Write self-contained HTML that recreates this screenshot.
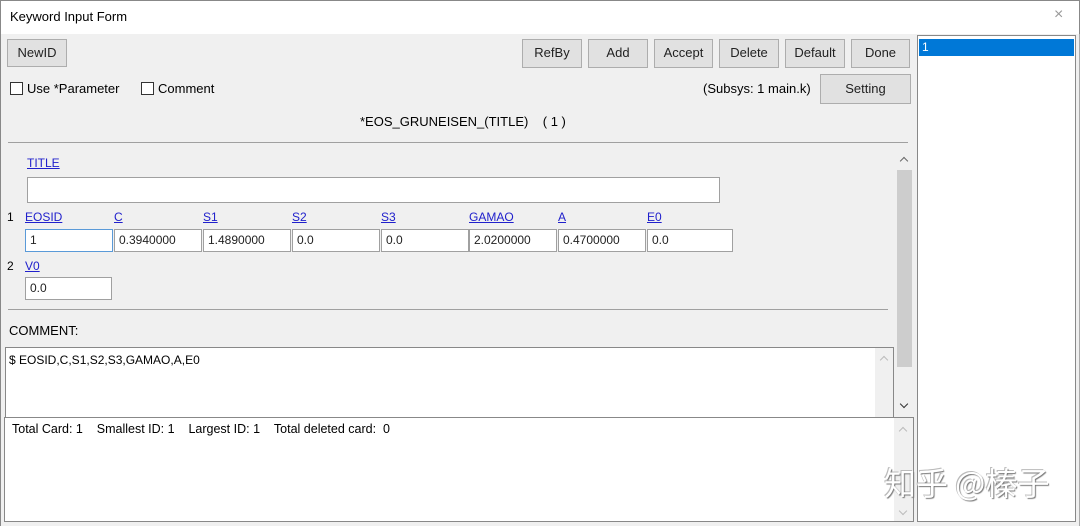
<!DOCTYPE html>
<html><head><style>
*{box-sizing:border-box;margin:0;padding:0}
body{width:1080px;height:526px;overflow:hidden;background:#f0f0f0;font-family:"Segoe UI","Liberation Sans","Noto Sans CJK SC",sans-serif;font-size:13px;color:#000;position:relative}
.a{position:absolute}
.tb{left:0;top:0;width:1080px;height:34px;background:#fff;border:1px solid #888;border-bottom:none}
.btn{position:absolute;background:#e1e1e1;border:1px solid #adadad;text-align:center;font-size:13px;line-height:26px;color:#222}
.in{position:absolute;background:#fff;border:1px solid #a0a0a0;font-size:12px;padding-left:4px;line-height:21px;height:23px;width:88px;color:#222}
.lk{position:absolute;color:#2020cc;text-decoration:underline;font-size:12px}
.cb{position:absolute;width:13px;height:13px;border:1px solid #333;background:#fff}
.up,.dn{position:absolute;width:6px;height:6px;border-left:1.5px solid #999;border-top:1.5px solid #999;transform:rotate(45deg)}
.dn{transform:rotate(225deg)}
</style></head><body>
<div class="a tb"></div>
<div class="a" style="left:10px;top:9px;font-size:13px">Keyword Input Form</div>
<div class="a" style="left:1054px;top:6px;font-size:16px;color:#999">×</div>
<div class="a" style="left:0;top:34px;width:1px;height:492px;background:#888"></div>
<div class="a" style="right:0;top:34px;width:1px;height:492px;background:#aaa"></div>

<div class="btn" style="left:7px;top:39px;width:60px;height:28px">NewID</div>
<div class="btn" style="left:522px;top:39px;width:60px;height:29px">RefBy</div>
<div class="btn" style="left:588px;top:39px;width:60px;height:29px">Add</div>
<div class="btn" style="left:654px;top:39px;width:59px;height:29px">Accept</div>
<div class="btn" style="left:719px;top:39px;width:60px;height:29px">Delete</div>
<div class="btn" style="left:785px;top:39px;width:60px;height:29px">Default</div>
<div class="btn" style="left:851px;top:39px;width:59px;height:29px">Done</div>

<div class="cb" style="left:10px;top:82px"></div><div class="a" style="left:27px;top:81px">Use *Parameter</div>
<div class="cb" style="left:141px;top:82px"></div><div class="a" style="left:158px;top:81px">Comment</div>
<div class="a" style="left:703px;top:81px">(Subsys: 1 main.k)</div>
<div class="btn" style="left:820px;top:74px;width:91px;height:30px;line-height:28px">Setting</div>
<div class="a" style="left:360px;top:114px">*EOS_GRUNEISEN_(TITLE) &nbsp;&nbsp;&nbsp;( 1 )</div>
<div class="a" style="left:8px;top:142px;width:900px;height:1px;background:#a0a0a0"></div>

<div class="a" style="left:896px;top:150px;width:17px;height:266px;background:#f0f0f0"></div>
<div class="up" style="left:901px;top:158px;border-color:#666"></div>
<div class="a" style="left:897px;top:170px;width:15px;height:197px;background:#cdcdcd"></div>
<div class="dn" style="left:901px;top:401px;border-color:#333"></div>

<div class="lk" style="left:27px;top:156px">TITLE</div>
<div class="a" style="left:27px;top:177px;width:693px;height:26px;background:#fff;border:1px solid #a0a0a0"></div>
<div class="a" style="left:7px;top:210px;font-size:12px">1</div>
<div class="lk" style="left:25px;top:210px">EOSID</div>
<div class="lk" style="left:114px;top:210px">C</div>
<div class="lk" style="left:203px;top:210px">S1</div>
<div class="lk" style="left:292px;top:210px">S2</div>
<div class="lk" style="left:381px;top:210px">S3</div>
<div class="lk" style="left:469px;top:210px">GAMAO</div>
<div class="lk" style="left:558px;top:210px">A</div>
<div class="lk" style="left:647px;top:210px">E0</div>
<div class="in" style="left:25px;top:229px;border-color:#5a9ad8">1</div>
<div class="in" style="left:114px;top:229px">0.3940000</div>
<div class="in" style="left:203px;top:229px">1.4890000</div>
<div class="in" style="left:292px;top:229px">0.0</div>
<div class="in" style="left:381px;top:229px">0.0</div>
<div class="in" style="left:469px;top:229px">2.0200000</div>
<div class="in" style="left:558px;top:229px">0.4700000</div>
<div class="in" style="left:647px;top:229px;width:86px">0.0</div>
<div class="a" style="left:7px;top:259px;font-size:12px">2</div>
<div class="lk" style="left:25px;top:259px">V0</div>
<div class="in" style="left:25px;top:277px;width:87px">0.0</div>
<div class="a" style="left:8px;top:309px;width:880px;height:1px;background:#a0a0a0"></div>
<div class="a" style="left:9px;top:323px">COMMENT:</div>
<div class="a" style="left:5px;top:347px;width:889px;height:72px;background:#fff;border:1px solid #888"></div>
<div class="a" style="left:875px;top:348px;width:18px;height:69px;background:#f0f0f0"></div>
<div class="up" style="left:881px;top:357px;border-color:#bbb"></div>
<div class="a" style="left:9px;top:353px;font-size:12px">$ EOSID,C,S1,S2,S3,GAMAO,A,E0</div>
<div class="a" style="left:4px;top:417px;width:910px;height:105px;background:#fff;border:1px solid #888"></div>
<div class="a" style="left:894px;top:418px;width:19px;height:103px;background:#f0f0f0"></div>
<div class="up" style="left:900px;top:428px;border-color:#bbb"></div>
<div class="dn" style="left:900px;top:508px;border-color:#bbb"></div>
<div class="a" style="left:12px;top:422px;font-size:12.5px">Total Card:&nbsp;1 &nbsp;&nbsp;&nbsp;Smallest ID:&nbsp;1 &nbsp;&nbsp;&nbsp;Largest ID:&nbsp;1 &nbsp;&nbsp;&nbsp;Total deleted card:&nbsp;&nbsp;0</div>

<div class="a" style="left:917px;top:35px;width:159px;height:487px;background:#fff;border:1px solid #888"></div>
<div class="a" style="left:919px;top:39px;width:155px;height:17px;background:#0078d7;color:#fff;font-size:12px;padding-left:3px;line-height:16px">1</div>
<div class="a" style="left:884px;top:460px;font-size:32px;line-height:44px;color:#fff;text-shadow:1px 1px 1px #777,-1px -1px 0 #bbb;font-family:'Noto Sans CJK SC',sans-serif;white-space:nowrap">知乎 @榛子</div>
</body></html>
